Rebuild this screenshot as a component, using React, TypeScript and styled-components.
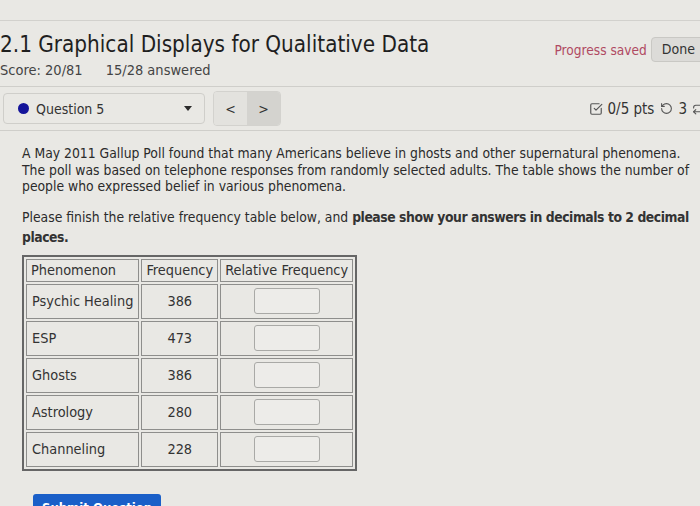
import styled, { createGlobalStyle } from "styled-components";
import { SquareCheckBig, RotateCcw, Repeat } from "lucide-react";

const GlobalStyle = createGlobalStyle`
  body {
    margin: 0;
    background: #e9e8e4;
    font-family: "DejaVu Sans Condensed", "DejaVu Sans", sans-serif;
    color: #2b2b2b;
    overflow: hidden;
  }
`;

const Page = styled.div`
  width: 700px;
  height: 506px;
  overflow: hidden;
`;

const TopStrip = styled.div`
  height: 20px;
  border-bottom: 1px solid #d2d1cd;
`;

const Header = styled.div`
  display: flex;
  justify-content: space-between;
  align-items: flex-start;
  height: 65px;
  border-bottom: 1px solid #cfceca;
`;

const TitleBlock = styled.div`
  padding-top: 10px;
`;

const Title = styled.h1`
  margin: 0;
  font-size: 22.3px;
  font-weight: normal;
  line-height: 26px;
  color: #1f1f1f;
  white-space: nowrap;
`;

const Score = styled.div`
  margin-top: 5px;
  font-size: 14.5px;
  color: #444;
  span {
    margin-left: 23px;
  }
`;

const SaveBox = styled.div`
  display: flex;
  align-items: center;
  gap: 4px;
  margin-top: 16px;
  margin-right: -16px;
`;

const Saved = styled.span`
  font-size: 13.6px;
  color: #b04a62;
`;

const DoneButton = styled.button`
  font-family: inherit;
  font-size: 14px;
  color: #333;
  background: #dcdbd8;
  border: 1px solid #c9c8c4;
  border-radius: 4px;
  padding: 3px 20px 4px 10px;
`;

const NavRow = styled.div`
  display: flex;
  align-items: center;
  height: 43px;
  padding-left: 3px;
  border-bottom: 1px solid #cfceca;
`;

const QuestionSelect = styled.div`
  display: flex;
  align-items: center;
  width: 202px;
  height: 31px;
  box-sizing: border-box;
  border: 1px solid #cfceca;
  border-radius: 4px;
  padding: 0 12px 0 14px;
  font-size: 14px;
  color: #333;
`;

const Dot = styled.span`
  width: 11px;
  height: 11px;
  border-radius: 50%;
  background: #14149a;
  margin-right: 7px;
`;

const Caret = styled.span`
  margin-left: auto;
  width: 0;
  height: 0;
  border-left: 4px solid transparent;
  border-right: 4px solid transparent;
  border-top: 5px solid #2b2b2b;
`;

const NavGroup = styled.div`
  display: flex;
  margin-left: 8px;
  height: 33px;
  border: 1px solid #d3d2ce;
  border-radius: 4px;
  overflow: hidden;
`;

const NavButton = styled.div<{ dark?: boolean }>`
  width: 33px;
  display: flex;
  align-items: center;
  justify-content: center;
  font-size: 14px;
  color: #333;
  background: ${(p) => (p.dark ? "#d4d3cf" : "#e3e2de")};
`;

const Points = styled.div`
  margin-left: auto;
  margin-right: -5px;
  display: flex;
  align-items: center;
  gap: 5px;
  font-size: 15px;
  color: #333;
  svg {
    color: #555;
  }
`;

const Content = styled.div`
  padding: 14px 2px 0 22px;
`;

const Para = styled.p<{ tall?: boolean }>`
  margin: 0 0 ${(p) => (p.tall ? 8 : 12)}px;
  font-size: 13.8px;
  line-height: ${(p) => (p.tall ? 20 : 16.5)}px;
  color: #2b2b2b;
  b {
    font-weight: bold;
    letter-spacing: -0.45px;
    color: #333;
  }
`;

const Table = styled.table`
  border: 2px solid #666;
  border-spacing: 2px;
`;

const Cell = styled.td<{ center?: boolean }>`
  border: 1px solid #8e8e8c;
  font-size: 14.4px;
  color: #333;
  padding: 0 5px;
  height: 33px;
  text-align: ${(p) => (p.center ? "center" : "left")};
`;

const HeadCell = styled.th`
  border: 1px solid #8e8e8c;
  font-size: 14.4px;
  font-weight: normal;
  color: #333;
  padding: 1px 4px 2px;
  height: 18px;
  text-align: left;
  white-space: nowrap;
`;

const AnswerBox = styled.input`
  display: block;
  margin: 0 auto;
  width: 66px;
  height: 26px;
  box-sizing: border-box;
  border: 1px solid #a9a9a6;
  border-radius: 3px;
  background: #edece9;
`;

const Submit = styled.button`
  margin: 23px 0 0 11px;
  font-family: inherit;
  font-size: 13px;
  font-weight: bold;
  color: #fff;
  background: #1a5fc8;
  border: none;
  border-radius: 3px;
  padding: 6px 9px;
`;

const rows = [
  ["Psychic Healing", "386"],
  ["ESP", "473"],
  ["Ghosts", "386"],
  ["Astrology", "280"],
  ["Channeling", "228"],
];

const App = () => {
  return (
    <Page>
      <GlobalStyle />
      <TopStrip />
      <Header>
        <TitleBlock>
          <Title>2.1 Graphical Displays for Qualitative Data</Title>
          <Score>
            Score: 20/81<span>15/28 answered</span>
          </Score>
        </TitleBlock>
        <SaveBox>
          <Saved>Progress saved</Saved>
          <DoneButton>Done</DoneButton>
        </SaveBox>
      </Header>
      <NavRow>
        <QuestionSelect>
          <Dot />
          Question 5
          <Caret />
        </QuestionSelect>
        <NavGroup>
          <NavButton>&lt;</NavButton>
          <NavButton dark>&gt;</NavButton>
        </NavGroup>
        <Points>
          <SquareCheckBig size={14} />
          0/5 pts
          <RotateCcw size={13} style={{ marginLeft: 1 }} />
          3
          <Repeat size={13} />
        </Points>
      </NavRow>
      <Content>
        <Para>
          A May 2011 Gallup Poll found that many Americans believe in ghosts and other supernatural phenomena.
          The poll was based on telephone responses from randomly selected adults. The table shows the number of
          people who expressed belief in various phenomena.
        </Para>
        <Para tall>
          Please finish the relative frequency table below, and <b>please show your answers in decimals to 2 decimal
          places.</b>
        </Para>
        <Table>
          <thead>
            <tr>
              <HeadCell>Phenomenon</HeadCell>
              <HeadCell>Frequency</HeadCell>
              <HeadCell>Relative Frequency</HeadCell>
            </tr>
          </thead>
          <tbody>
            {rows.map(([name, freq]) => (
              <tr key={name}>
                <Cell>{name}</Cell>
                <Cell center>{freq}</Cell>
                <Cell>
                  <AnswerBox />
                </Cell>
              </tr>
            ))}
          </tbody>
        </Table>
        <Submit>Submit Question</Submit>
      </Content>
    </Page>
  );
};

export default App;
